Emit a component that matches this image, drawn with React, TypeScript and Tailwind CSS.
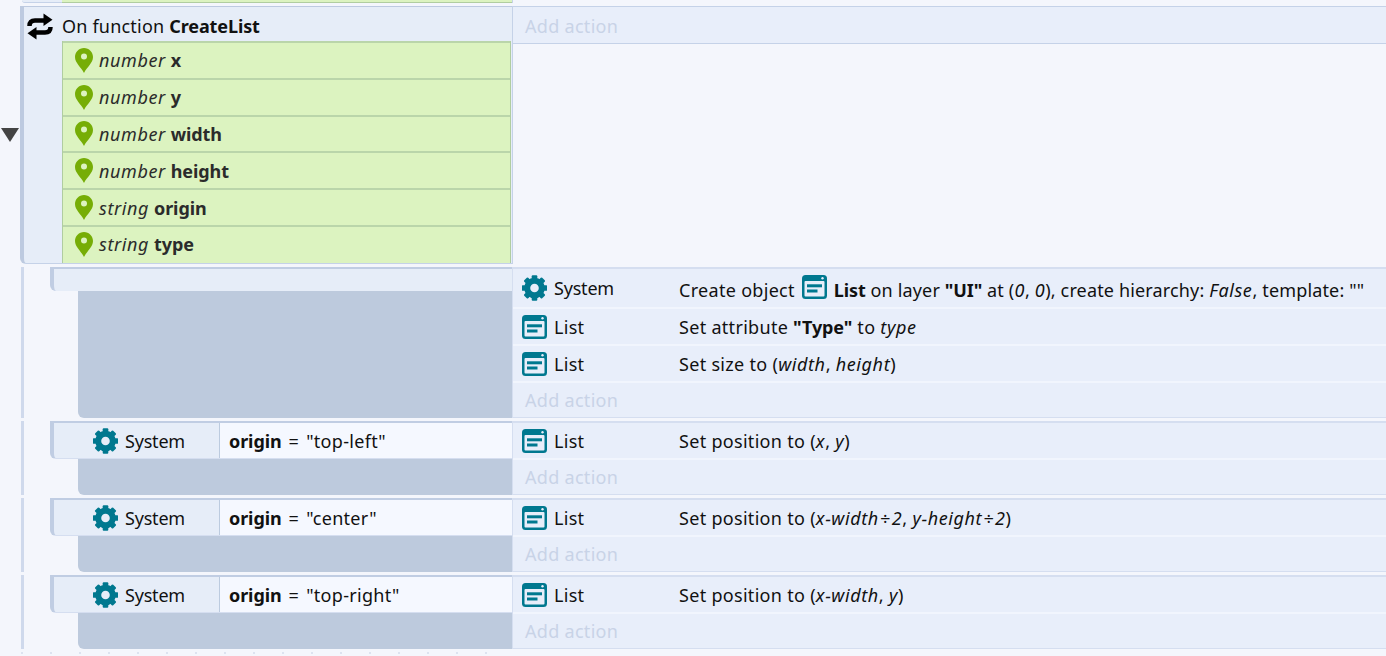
import type { ReactNode } from 'react';

const params = [
  { type: 'number', name: 'x' },
  { type: 'number', name: 'y' },
  { type: 'number', name: 'width' },
  { type: 'number', name: 'height' },
  { type: 'string', name: 'origin' },
  { type: 'string', name: 'type' },
];

const teeth = [0, 45, 90, 135, 180, 225, 270, 315];

function GearIcon() {
  return (
    <svg viewBox="0 0 25 26" className="h-[26px] w-[25px] shrink-0">
      <circle cx="12.5" cy="13" r="7.3" fill="none" stroke="#00788f" strokeWidth="6" />
      {teeth.map((deg) => (
        <rect key={deg} x="9.7" y="0.3" width="5.6" height="6" rx="1" fill="#00788f" transform={`rotate(${deg} 12.5 13)`} />
      ))}
    </svg>
  );
}

function PinIcon() {
  return (
    <svg viewBox="0 0 18 25" className="mr-[6px] h-[25px] w-[18px] shrink-0">
      <path
        fillRule="evenodd"
        fill="#76ad06"
        d="M9 0 C4 0 0 4 0 9 C0 15 6 19 9 25 C12 19 18 15 18 9 C18 4 14 0 9 0 Z M9 5.5 A3 3 0 1 1 9 11.5 A3 3 0 1 1 9 5.5 Z"
      />
    </svg>
  );
}

function ListIcon() {
  return (
    <svg viewBox="0 0 25 24" className="h-[24px] w-[25px] shrink-0">
      <rect width="25" height="24" rx="3.5" fill="#00788f" />
      <rect x="2.5" y="6" width="20" height="15.5" rx="1" fill="#e8eefa" />
      <circle cx="20.5" cy="3.3" r="1.2" fill="#e8eefa" />
      <rect x="5" y="9.3" width="15" height="3" fill="#00788f" />
      <rect x="5" y="14.5" width="10.5" height="3" fill="#00788f" />
    </svg>
  );
}

function RepeatIcon() {
  return (
    <svg viewBox="0 0 26 27" className="h-[27px] w-[26px]">
      <path d="M2.5 13 C2.5 9 4.5 7.5 8 7.5 H18" fill="none" stroke="#000" strokeWidth="4.5" />
      <path d="M16.5 0.5 L25.5 6.8 L16.5 13 Z" fill="#000" />
      <g transform="rotate(180 13 13.5)">
        <path d="M2.5 13 C2.5 9 4.5 7.5 8 7.5 H18" fill="none" stroke="#000" strokeWidth="4.5" />
        <path d="M16.5 0.5 L25.5 6.8 L16.5 13 Z" fill="#000" />
      </g>
    </svg>
  );
}

function Action({ icon, label, height, children }: { icon: 'gear' | 'list'; label: string; height: string; children: ReactNode }) {
  return (
    <div className={`flex items-center border-b-2 border-[#f1f5fd] pl-[9px] ${height}`}>
      <div className="flex w-[157px] shrink-0 items-center gap-[7px]">
        {icon === 'gear' ? <GearIcon /> : <ListIcon />}
        <span className={icon === 'gear' ? 'tracking-[-0.2px]' : ''}>{label}</span>
      </div>
      {children}
    </div>
  );
}

function AddAction({ height }: { height: string }) {
  return <div className={`flex items-center pl-[12px] text-[#c8d3e7] ${height}`}>Add action</div>;
}

function SubEvent({ origin, text }: { origin: string; text: ReactNode }) {
  return (
    <div className="mb-[3px] flex h-[74px]">
      <div className="ml-[21px] w-[3px] shrink-0 bg-[#cfd9ec]" />
      <div className="ml-[26px] flex w-[462px] shrink-0 flex-col">
        <div className="flex h-[38px] shrink-0 rounded-bl-[6px] border-t-2 border-b border-l-4 border-[#c0cde3] border-b-[#d5def0] bg-[#e6edf8]">
          <div className="flex w-[166px] shrink-0 items-center gap-[7px] border-r border-[#bccbdf] pl-[39px]">
            <GearIcon />
            <span className="tracking-[-0.2px]">System</span>
          </div>
          <div className="flex flex-1 items-center bg-[#f5f8ff] pl-[9px]">
            <span className="whitespace-pre">
              <b>origin</b>
              <span className="mx-[7px]">=</span>"{origin}"
            </span>
          </div>
        </div>
        <div className="ml-[28px] flex-1 rounded-bl-[6px] bg-[#bdcadd]" />
      </div>
      <div className="flex-1 border-t-2 border-b border-l border-[#d5def0] bg-[#e8eefa]">
        <Action icon="list" label="List" height="h-[37px]">
          <span className="whitespace-pre">{text}</span>
        </Action>
        <AddAction height="h-[34px]" />
      </div>
    </div>
  );
}

export default function App() {
  return (
    <div className="h-[656px] w-[1386px] overflow-hidden bg-[#f4f6fc] text-[18px] leading-none tracking-[0.3px] text-[#111] [font-family:'Noto_Sans',sans-serif] [&_b]:tracking-[-0.1px] [&_i]:tracking-[0.6px]">
      <div className="flex h-[3px]">
        <div className="ml-[22px] w-[40px] rounded-bl-[4px] border-b border-[#c5d2e8] bg-[#e6edf8]" />
        <div className="w-[450px] border-b border-[#b0cda0] bg-[#dcf3c0]" />
        <div className="w-px bg-[#c5d2e8]" />
      </div>
      <div className="h-[3px]" />

      {/* function header with its parameters */}
      <div className="mb-[3px] flex h-[258px]">
        <div className="flex w-[20px] shrink-0 items-center pl-px">
          <svg viewBox="0 0 18 14" className="h-[14px] w-[18px]">
            <path d="M0 0 H18 L9 14 Z" fill="#444" />
          </svg>
        </div>
        <div className="flex w-[492px] shrink-0 rounded-bl-[6px] border-t border-b border-l-4 border-[#bdcae0] border-b-[#c5d2e8] bg-[#e6edf8]">
          <div className="w-[38px] shrink-0 pt-[6px] pl-[3px]">
            <RepeatIcon />
          </div>
          <div className="flex flex-1 flex-col">
            <div className="flex h-[34px] shrink-0 items-center pt-[3px]">
              <span className="whitespace-pre tracking-[0.2px]">
                On function <b>CreateList</b>
              </span>
            </div>
            <div className="mr-px flex-1 border-l border-r border-[#b0cda0] bg-[#dcf3c0]">
              {params.map((p) => (
                <div key={p.name} className="flex h-[36.8px] items-center border-t-2 border-[#bad5aa] pl-[12px] text-[#2b2b2b]">
                  <PinIcon />
                  <span className="whitespace-pre [&_i]:tracking-[0.4px]">
                    <i>{p.type}</i> <b>{p.name}</b>
                  </span>
                </div>
              ))}
            </div>
          </div>
        </div>
        <div className="flex-1 border-l border-[#c5d2e8]">
          <div className="h-[38px] border-t border-b border-[#c5d2e8] bg-[#e8eefa] pt-px">
            <AddAction height="h-[36px]" />
          </div>
        </div>
      </div>

      {/* create object block */}
      <div className="mb-[3px] flex h-[151px]">
        <div className="ml-[21px] w-[3px] shrink-0 bg-[#cfd9ec]" />
        <div className="ml-[26px] flex w-[462px] shrink-0 flex-col">
          <div className="h-[24px] shrink-0 rounded-bl-[6px] border-t-2 border-l-4 border-[#c0cde3] bg-[#e6edf8]" />
          <div className="ml-[28px] flex-1 rounded-bl-[6px] bg-[#bdcadd]" />
        </div>
        <div className="flex-1 border-t-2 border-b border-l border-[#d5def0] bg-[#e8eefa]">
          <Action icon="gear" label="System" height="h-[40px]">
            <span className="flex items-center pt-[3px] whitespace-pre">
              <span>Create object</span>
              <span className="mx-[7px] -translate-y-[3px]">
                <ListIcon />
              </span>
              <span className="tracking-[0.15px] [&_i]:tracking-[0.3px]">
                <b>List</b> on layer <b>"UI"</b> at (<i>0</i>, <i>0</i>), create hierarchy: <i>False</i>, template: ""
              </span>
            </span>
          </Action>
          <Action icon="list" label="List" height="h-[37px]">
            <span className="whitespace-pre">
              Set attribute <b>"Type"</b> to <i>type</i>
            </span>
          </Action>
          <Action icon="list" label="List" height="h-[37px]">
            <span className="whitespace-pre [&_i]:tracking-[0.4px]">
              Set size to (<i>width</i>, <i>height</i>)
            </span>
          </Action>
          <AddAction height="h-[34px]" />
        </div>
      </div>

      <SubEvent origin="top-left" text={<>Set position to (<i>x</i>, <i>y</i>)</>} />
      <SubEvent
        origin="center"
        text={
          <>
            Set position to (<i>x-width<span className="mx-[1px]">÷</span>2</i>, <i>y-height<span className="mx-[1px]">÷</span>2</i>)
          </>
        }
      />
      <SubEvent origin="top-right" text={<>Set position to (<i>x-width</i>, <i>y</i>)</>} />

      {/* faint tick marks of the next row */}
      <div className="ml-[21px] flex h-[2px] w-[480px]">
        {Array.from({ length: 17 }, (_, i) => (
          <div key={i} className="w-[29px] shrink-0">
            <div className="h-[2px] w-[2px] bg-[#dde3f0]" />
          </div>
        ))}
      </div>
    </div>
  );
}
